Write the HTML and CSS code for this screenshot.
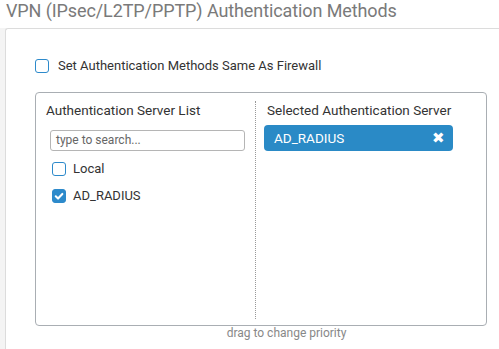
FILE: index.html
```html
<!DOCTYPE html>
<html>
<head>
<meta charset="utf-8">
<link rel="stylesheet" href="styles.css">
</head>
<body>
<div class="page">
  <h1 class="title">VPN (IPsec/L2TP/PPTP) Authentication Methods</h1>
  <div class="panel">
    <label class="same">
      <span class="cb"></span>
      <span class="same-text">Set Authentication Methods Same As Firewall</span>
    </label>
    <div class="picker">
      <div class="col left">
        <div class="col-head">Authentication Server List</div>
        <div class="search">type to search...</div>
        <div class="opt"><span class="cb"></span><span>Local</span></div>
        <div class="opt"><span class="cb checked"><svg viewBox="0 0 14 14" width="14" height="14"><path d="M3.2 7.3 L5.9 10 L10.9 4.6" fill="none" stroke="#fff" stroke-width="2.4" stroke-linecap="round" stroke-linejoin="round"/></svg></span><span>AD_RADIUS</span></div>
      </div>
      <div class="divider"></div>
      <div class="col right">
        <div class="col-head">Selected Authentication Server</div>
        <div class="pill"><span>AD_RADIUS</span><span class="x">&#10006;</span></div>
      </div>
    </div>
    <div class="hint">drag to change priority</div>
  </div>
</div>
</body>
</html>
```
FILE: styles.css
```css
html, body { margin: 0; padding: 0; }
body {
  background: #f4f4f4;
  font-family: Roboto, "Liberation Sans", sans-serif;
  width: 499px;
  height: 349px;
  overflow: hidden;
}
.page { padding-left: 5px; }
.title {
  margin: 0 0 0 -5px;
  padding: 0 0 0 6px;
  height: 28px;
  line-height: 22px;
  font-size: 18px;
  font-weight: 400;
  color: #7a7a7a;
  background: #fff;
  letter-spacing: -0.1px;
}
.panel {
  background: #fff;
  border: 1px solid #dcdcdc;
  border-right: none;
  border-radius: 3px 0 0 0;
  height: 330px;
  padding: 29px 0 0 29px;
  box-sizing: border-box;
}
.same {
  display: flex;
  align-items: center;
  height: 15px;
  gap: 9px;
  font-size: 13px;
  color: #333;
}
.cb {
  width: 12px;
  height: 12px;
  border: 1.5px solid #2d8acb;
  border-radius: 3px;
  display: inline-flex;
  align-items: center;
  justify-content: center;
  flex: none;
  background: #fff;
}
.cb.checked { background: #2d8acb; }
.picker {
  margin-top: 19px;
  width: 452px;
  height: 234px;
  box-sizing: border-box;
  border: 1px solid #a9aeb3;
  border-radius: 4px;
  display: flex;
}
.col.left { width: 219px; padding: 9px 0 0 10px; box-sizing: border-box; }
.divider {
  width: 0;
  border-left: 1px dotted #999;
  margin: 8px 0 6px 0;
}
.col.right { flex: 1; padding: 9px 0 0 8px; box-sizing: border-box; }
.col-head {
  font-size: 13.5px;
  color: #333;
  height: 16px;
  line-height: 16px;
}
.right .col-head { padding-left: 3px; }
.search {
  margin: 12px 0 0 4px;
  width: 195px;
  height: 21px;
  box-sizing: border-box;
  border: 1px solid #b5b5b5;
  border-radius: 3px;
  font-size: 12px;
  color: #666;
  line-height: 19px;
  padding-left: 5px;
}
.opt {
  display: flex;
  align-items: center;
  gap: 7px;
  font-size: 13px;
  color: #333;
  margin-left: 6px;
  height: 15px;
}
.search + .opt { margin-top: 10px; }
.opt + .opt { margin-top: 12px; }
.pill {
  margin-top: 7px;
  width: 189px;
  height: 26px;
  background: #2a8ac6;
  border-radius: 4px;
  color: #fff;
  font-size: 13.5px;
  display: flex;
  align-items: center;
  justify-content: space-between;
  padding: 0 8px 0 10px;
  box-sizing: border-box;
}
.pill .x { font-size: 15px; }
.hint {
  width: 452px;
  text-align: center;
  font-size: 12px;
  color: #888;
  padding-left: 51px;
  box-sizing: border-box;
  line-height: 14px;
}
```
